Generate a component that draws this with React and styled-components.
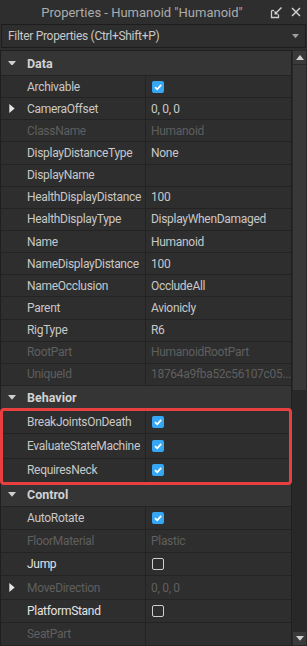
import React from 'react'
import styled, { createGlobalStyle } from 'styled-components'

const GlobalStyle = createGlobalStyle`
  html, body {
    margin: 0;
    padding: 0;
    background: #2e2e2e;
  }
  body {
    font-family: Roboto, "Liberation Sans", sans-serif;
  }
`

const sections = [
  {
    title: 'Data',
    rowHeight: 22.15,
    rows: [
      { name: 'Archivable', check: true },
      { name: 'CameraOffset', value: '0, 0, 0', expand: true },
      { name: 'ClassName', value: 'Humanoid', disabled: true },
      { name: 'DisplayDistanceType', value: 'None' },
      { name: 'DisplayName', value: '' },
      { name: 'HealthDisplayDistance', value: '100' },
      { name: 'HealthDisplayType', value: 'DisplayWhenDamaged' },
      { name: 'Name', value: 'Humanoid' },
      { name: 'NameDisplayDistance', value: '100' },
      { name: 'NameOcclusion', value: 'OccludeAll' },
      { name: 'Parent', value: 'Avionicly' },
      { name: 'RigType', value: 'R6' },
      { name: 'RootPart', value: 'HumanoidRootPart', disabled: true },
      { name: 'UniqueId', value: '18764a9fba52c56107c05...', disabled: true },
    ],
  },
  {
    title: 'Behavior',
    rowHeight: 24.3,
    marked: true,
    rows: [
      { name: 'BreakJointsOnDeath', check: true },
      { name: 'EvaluateStateMachine', check: true },
      { name: 'RequiresNeck', check: true },
    ],
  },
  {
    title: 'Control',
    rowHeight: 23.2,
    rows: [
      { name: 'AutoRotate', check: true },
      { name: 'FloorMaterial', value: 'Plastic', disabled: true },
      { name: 'Jump', check: false, bright: true },
      { name: 'MoveDirection', value: '0, 0, 0', disabled: true, expand: true },
      { name: 'PlatformStand', check: false, bright: true },
      { name: 'SeatPart', value: '', disabled: true },
    ],
  },
]

const Panel = styled.div`
  width: 307px;
  height: 646px;
  background: #2e2e2e;
  display: flex;
  flex-direction: column;
  overflow: hidden;
`

const TitleBar = styled.div`
  height: 24px;
  display: flex;
  align-items: center;
  padding: 0 6px 0 0;
  color: #acacac;
  font-size: 13px;
`

const Title = styled.div`
  flex: 1;
  text-align: center;
  padding-left: 14px;
`

const TitleIcons = styled.div`
  display: flex;
  align-items: center;
  gap: 8px;
`

const FilterBar = styled.div`
  height: 22px;
  margin: 0 1px;
  border: 1px solid #1d1d1d;
  background: #2e2e2e;
  display: flex;
  align-items: center;
  padding: 0 6px;
  color: #c8c8c8;
  font-size: 12px;
  letter-spacing: -0.3px;
`

const FilterText = styled.div`
  flex: 1;
`

const Body = styled.div`
  flex: 1;
  display: flex;
  margin-top: 2px;
  min-height: 0;
`

const List = styled.div`
  flex: 1;
  border-left: 1px solid #1f1f1f;
  border-top: 1px solid #1f1f1f;
  display: flex;
  flex-direction: column;
`

const Header = styled.div`
  height: ${p => p.$h}px;
  box-sizing: border-box;
  background: #353535;
  border-bottom: 1px solid #232323;
  display: flex;
  align-items: center;
  color: #d2d2d2;
  font-weight: bold;
  font-size: 12.5px;
`

const Twisty = styled.div`
  width: 26px;
  display: flex;
  justify-content: center;
  padding-right: 4px;
  box-sizing: border-box;
  flex-shrink: 0;
`

const Group = styled.div`
  position: relative;
  &::after {
    content: '';
    display: ${p => (p.$marked ? 'block' : 'none')};
    position: absolute;
    left: -1px;
    right: -1px;
    top: -2px;
    bottom: -2px;
    border: 3px solid #e8403f;
    border-radius: 4px;
    pointer-events: none;
  }
`

const Row = styled.div`
  height: ${p => p.$h}px;
  box-sizing: border-box;
  display: grid;
  grid-template-columns: 145px 1fr;
  border-bottom: 1px solid #232323;
  font-size: 12px;
  letter-spacing: -0.3px;
`

const NameCell = styled.div`
  display: flex;
  align-items: center;
  border-right: 1px solid #232323;
  color: ${p => (p.$disabled ? '#5f5f5f' : p.$bright ? '#e4e4e4' : '#c8c8c8')};
  white-space: nowrap;
  overflow: hidden;
`

const ValueCell = styled.div`
  display: flex;
  align-items: center;
  padding-left: 5px;
  color: ${p => (p.$disabled ? '#5f5f5f' : '#c8c8c8')};
  white-space: nowrap;
  min-width: 0;
`

const Check = styled.div`
  width: ${p => (p.$on ? 12 : 10)}px;
  height: ${p => (p.$on ? 12 : 10)}px;
  margin-left: 1px;
  border-radius: 2px;
  background: ${p => (p.$on ? '#35a7f4' : 'transparent')};
  border: ${p => (p.$on ? 'none' : '1px solid #cfcfcf')};
  display: flex;
  align-items: center;
  justify-content: center;
`

const Scrollbar = styled.div`
  width: 15px;
  background: #282828;
  border-left: 1px solid #1f1f1f;
  display: flex;
  flex-direction: column;
`

const ScrollButton = styled.div`
  height: 13px;
  background: #3a3a3a;
  margin: 1px;
  display: flex;
  align-items: center;
  justify-content: center;
`

const ScrollTrack = styled.div`
  flex: 1;
  display: flex;
  flex-direction: column;
  padding: 0 1px;
`

const ScrollThumb = styled.div`
  height: ${p => p.$h}px;
  background: #383838;
`

const DownTri = ({ color = '#cfcfcf', size = 8 }) => (
  <svg width={size} height={size * 0.6} viewBox="0 0 10 6">
    <path d="M0 0 L10 0 L5 6 Z" fill={color} />
  </svg>
)

const RightTri = () => (
  <svg width="6" height="9" viewBox="0 0 6 10">
    <path d="M0 0 L6 5 L0 10 Z" fill="#e6e6e6" />
  </svg>
)

const UpTri = () => (
  <svg width="8" height="5" viewBox="0 0 10 6">
    <path d="M0 6 L10 6 L5 0 Z" fill="#cfcfcf" />
  </svg>
)

const CheckMark = () => (
  <svg width="10" height="10" viewBox="0 0 10 10">
    <path d="M2 5.2 L4.2 7.3 L8.2 2.8" stroke="#fff" strokeWidth="1.8" fill="none" />
  </svg>
)

const UndockIcon = () => (
  <svg width="13" height="13" viewBox="0 0 13 13">
    <path d="M1.5 4.5 V11.5 H8.5 V8.5" stroke="#cfcfcf" strokeWidth="1.3" fill="none" />
    <path d="M1.5 4.5 H4" stroke="#cfcfcf" strokeWidth="1.3" fill="none" />
    <path d="M11.5 1.5 L6 7" stroke="#cfcfcf" strokeWidth="1.5" />
    <path d="M4.5 4.5 L4.5 8.5 L8.5 8.5 Z" fill="#cfcfcf" />
  </svg>
)

const CloseIcon = () => (
  <svg width="10" height="10" viewBox="0 0 10 10">
    <path d="M1 1 L9 9 M9 1 L1 9" stroke="#cfcfcf" strokeWidth="1.5" />
  </svg>
)

const PropRow = ({ row, h }) => (
  <Row $h={h}>
    <NameCell $disabled={row.disabled} $bright={row.bright}>
      <Twisty>{row.expand && <RightTri />}</Twisty>
      {row.name}
    </NameCell>
    <ValueCell $disabled={row.disabled}>
      {row.check !== undefined ? (
        <Check $on={row.check}>{row.check && <CheckMark />}</Check>
      ) : (
        row.value
      )}
    </ValueCell>
  </Row>
)

const App = () => {
  return (
    <>
      <GlobalStyle />
      <Panel>
        <TitleBar>
          <Title>Properties - Humanoid "Humanoid"</Title>
          <TitleIcons>
            <UndockIcon />
            <CloseIcon />
          </TitleIcons>
        </TitleBar>
        <FilterBar>
          <FilterText>Filter Properties (Ctrl+Shift+P)</FilterText>
          <DownTri color="#a0a0a0" size={7} />
        </FilterBar>
        <Body>
          <List>
            {sections.map(s => (
              <React.Fragment key={s.title}>
                <Header $h={s.title === 'Data' ? 25 : 24}>
                  <Twisty>
                    <DownTri />
                  </Twisty>
                  {s.title}
                </Header>
                <Group $marked={s.marked}>
                  {s.rows.map(r => (
                    <PropRow key={r.name} row={r} h={s.rowHeight} />
                  ))}
                </Group>
              </React.Fragment>
            ))}
          </List>
          <Scrollbar>
            <ScrollButton>
              <UpTri />
            </ScrollButton>
            <ScrollTrack>
              <ScrollThumb $h={325} />
            </ScrollTrack>
            <ScrollButton>
              <DownTri size={8} />
            </ScrollButton>
          </Scrollbar>
        </Body>
      </Panel>
    </>
  )
}

export default App
